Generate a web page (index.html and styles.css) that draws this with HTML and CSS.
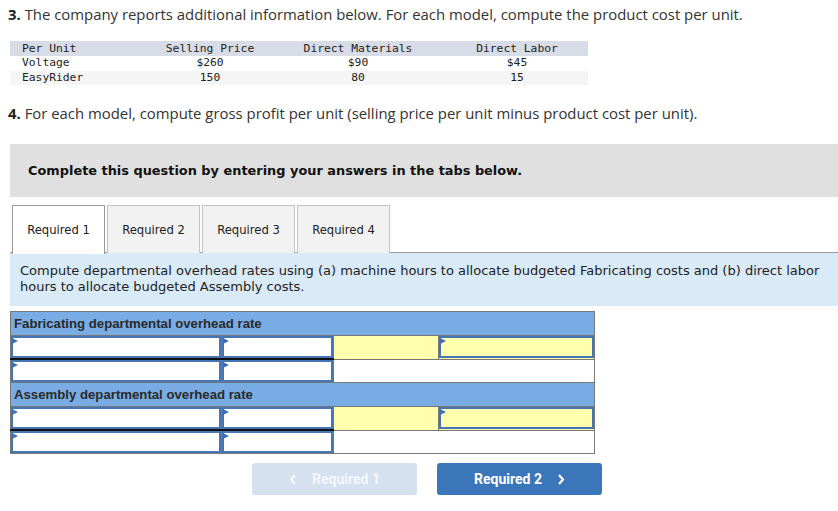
FILE: index.html
```html
<!DOCTYPE html>
<html>
<head>
<meta charset="utf-8">
<link rel="stylesheet" href="styles.css">
</head>
<body>
<p class="q q3"><b>3.</b> The company reports additional information below. For each model, compute the product cost per unit.</p>
<table class="data">
  <colgroup><col class="c1"><col class="c2"><col class="c3"><col class="c4"></colgroup>
  <tr class="hd"><td class="l">Per Unit</td><td>Selling Price</td><td>Direct Materials</td><td>Direct Labor</td></tr>
  <tr><td class="l">Voltage</td><td>$260</td><td>$90</td><td>$45</td></tr>
  <tr class="alt"><td class="l">EasyRider</td><td>150</td><td>80</td><td>15</td></tr>
</table>
<p class="q q4"><b>4.</b> For each model, compute gross profit per unit (selling price per unit minus product cost per unit).</p>

<div class="panel">
  <div class="instr">Complete this question by entering your answers in the tabs below.</div>
  <div class="tabs">
    <div class="tab active">Required 1</div>
    <div class="tab">Required 2</div>
    <div class="tab">Required 3</div>
    <div class="tab">Required 4</div>
  </div>
  <div class="info">Compute departmental overhead rates using (a) machine hours to allocate budgeted Fabricating costs and (b) direct labor hours to allocate budgeted Assembly costs.</div>
</div>

<table class="grid">
  <colgroup><col class="g1"><col class="g2"><col class="g3"><col class="g4"></colgroup>
  <tr class="ghd"><td colspan="4">Fabricating departmental overhead rate</td></tr>
  <tr class="r1">
    <td class="in under"><div class="box"></div></td>
    <td class="in under"><div class="box"></div></td>
    <td class="yel"></td>
    <td class="in yel"><div class="box"></div></td>
  </tr>
  <tr class="r2">
    <td class="in"><div class="box"></div></td>
    <td class="in"><div class="box"></div></td>
    <td colspan="2"></td>
  </tr>
  <tr class="ghd"><td colspan="4">Assembly departmental overhead rate</td></tr>
  <tr class="r1">
    <td class="in under"><div class="box"></div></td>
    <td class="in under"><div class="box"></div></td>
    <td class="yel"></td>
    <td class="in yel"><div class="box"></div></td>
  </tr>
  <tr class="r2">
    <td class="in"><div class="box"></div></td>
    <td class="in"><div class="box"></div></td>
    <td colspan="2"></td>
  </tr>
</table>

<div class="nav">
  <div class="btn prev"><svg width="8" height="11" viewBox="0 0 8 11"><polyline points="6,1 2,5.5 6,10" fill="none" stroke="currentColor" stroke-width="2.2"/></svg><span>Required 1</span></div>
  <div class="btn next"><span>Required 2</span><svg width="8" height="11" viewBox="0 0 8 11"><polyline points="2,1 6,5.5 2,10" fill="none" stroke="currentColor" stroke-width="2.2"/></svg></div>
</div>
</body>
</html>
```
FILE: styles.css
```css
* { box-sizing: border-box; }
body {
  margin: 0;
  background: #fff;
  font-family: "Open Sans", "Lato", sans-serif;
  color: #2b2b2b;
}
.q {
  margin: 0;
  padding-left: 8px;
  font-size: 14.9px;
  line-height: 18px;
  color: #333;
}
.q b { font-weight: 700; color: #222; }
.q3 { padding-top: 5px; }
.data {
  margin: 18px 0 0 10px;
  border-collapse: collapse;
  font-family: "DejaVu Sans Mono", monospace;
  font-size: 11.3px;
  color: #222;
  table-layout: fixed;
}
.data .c1 { width: 140px; }
.data .c2 { width: 120px; }
.data .c3 { width: 176px; }
.data .c4 { width: 142px; }
.data td { padding: 0; height: 14.5px; line-height: 14px; text-align: center; white-space: nowrap; }
.data td.l { text-align: left; padding-left: 12px; }
.data .hd td { background: #d8dce6; height: 15px; }
.data .alt td { background: #f5f5f5; }
.q4 { margin-top: 19px; }

.panel { margin: 22px 0 0 10px; }
.instr {
  background: #e0e0e0;
  height: 53px;
  padding-left: 18px;
  display: flex;
  align-items: center;
  font-family: "DejaVu Sans", Verdana, sans-serif;
  font-weight: 700;
  font-size: 12.9px;
  color: #111;
}
.tabs {
  display: flex;
  align-items: flex-start;
  gap: 2px;
  margin-top: 8px;
  padding-left: 2px;
  border-bottom: 1px solid #9a9a9a;
  height: 48px;
}
.tab {
  width: 93px;
  height: 48px;
  border: 1px solid #c4c4c4;
  border-bottom: none;
  background: #f2f2f2;
  display: flex;
  align-items: center;
  justify-content: center;
  font-family: "DejaVu Sans", Verdana, sans-serif;
  font-size: 11.6px;
  color: #222;
}
.tab.active {
  background: #fff;
  border-color: #999;
  height: 49px;
  margin-bottom: -1px;
}
.info {
  background: #d9eaf8;
  height: 53px;
  padding: 10px 6px 0 10px;
  font-family: "DejaVu Sans", Verdana, sans-serif;
  font-size: 13px;
  line-height: 16px;
  color: #222;
}

.grid {
  margin: 5px 0 0 10px;
  border-collapse: collapse;
  table-layout: fixed;
  width: 584px;
}
.grid .g1 { width: 211px; }
.grid .g2 { width: 112px; }
.grid .g3 { width: 105px; }
.grid .g4 { width: 156px; }
.grid td {
  border: 1px solid #777;
  padding: 0;
  height: 23px;
}
.grid .ghd td {
  background: #79ace4;
  height: 24px;
  font-family: "Liberation Sans", Arial, sans-serif;
  font-weight: 700;
  font-size: 13.2px;
  color: #2a2a2a;
  padding-left: 3px;
  vertical-align: middle;
}
.grid td.yel { background: #ffffad; }
.grid td.in { position: relative; padding: 0; }
.grid .box {
  height: 22px;
  border: 2px solid #4675b5;
  position: relative;
}
.grid td.under .box { border-bottom: 2px solid #4675b5; box-shadow: 0 1px 0 #111; }
.grid td.under { border-bottom: 2px solid #111; }
.grid .box::before {
  content: "";
  position: absolute;
  left: -1px;
  top: 0;
  border-left: 6px solid #3b6fb6;
  border-top: 3.5px solid transparent;
  border-bottom: 3.5px solid transparent;
}

.nav {
  display: flex;
  gap: 20px;
  margin: 9px 0 0 252px;
}
.btn {
  width: 165px;
  height: 32px;
  border-radius: 3px;
  display: flex;
  align-items: center;
  justify-content: center;
  gap: 15px;
  font-family: Roboto, "Liberation Sans", sans-serif;
  font-weight: 700;
  font-size: 14px;
}
.btn.prev { background: #d5e1ef; color: #f4f7fb; }
.btn.next { background: #3a76b9; color: #fff; }
.btn svg { display: block; }
```
